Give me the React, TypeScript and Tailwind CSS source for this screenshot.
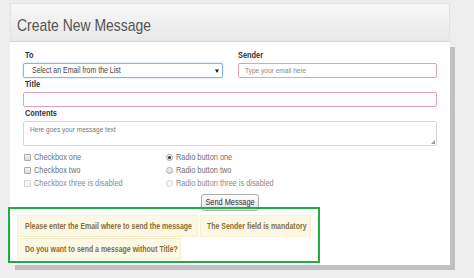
import React from "react";

const F = "font-['Liberation_Sans',Arial,sans-serif]";

function T({ c = "", center, children }: { c?: string; center?: boolean; children: React.ReactNode }) {
  return (
    <span className={`inline-block whitespace-nowrap scale-x-[0.82] ${center ? "origin-center" : "origin-left"} ${c}`}>
      {children}
    </span>
  );
}

function Check({ disabled, label }: { disabled?: boolean; label: string }) {
  return (
    <div className="h-[13px] flex items-center">
      <span
        className={`ml-[1px] w-[7px] h-[7px] shrink-0 rounded-[1px] border ${disabled ? "border-[#d4d4d4] bg-[#f6f6f6]" : "border-[#aaaaaa] bg-gradient-to-b from-[#f4f4f4] to-[#dddddd]"}`}
      />
      <T c={`ml-[3px] text-[9px] leading-[13px] ${disabled ? "text-[#8a8a8a]" : "text-[#707070]"}`}>{label}</T>
    </div>
  );
}

function Radio({ disabled, checked, label }: { disabled?: boolean; checked?: boolean; label: string }) {
  return (
    <div className="h-[13px] flex items-center">
      <span
        className={`w-[7px] h-[7px] shrink-0 rounded-full border flex items-center justify-center ${disabled ? "border-[#d4d4d4] bg-[#f6f6f6]" : "border-[#aaaaaa] bg-gradient-to-b from-[#f4f4f4] to-[#dddddd]"}`}
      >
        {checked && <span className="w-[3px] h-[3px] rounded-full bg-[#333]" />}
      </span>
      <T c={`ml-[3px] text-[9px] leading-[13px] ${disabled ? "text-[#8a8a8a]" : "text-[#707070]"}`}>{label}</T>
    </div>
  );
}

function Label({ children, c = "" }: { children: React.ReactNode; c?: string }) {
  return (
    <div className={`h-[12px] text-[9px] font-bold leading-[12px] text-[#333] ${c}`}>
      <T>{children}</T>
    </div>
  );
}

export default function App() {
  return (
    <div className={`${F} w-[474px] h-[278px] bg-[#eeeeee] relative overflow-hidden`}>
      <div className="ml-[10px] pt-[3px] w-[440px]">
        <div className="h-[39px] bg-gradient-to-b from-[#f8f8f8] to-[#e8e8e8] border border-[#e2e2e2] border-b-[#d6d6d6] pl-[6px] flex items-center pt-[5px]">
          <T c="text-[17px] text-[#555555] leading-none">Create New Message</T>
        </div>
        <div className="bg-white h-[223px] shadow-[5px_5px_0_#c0c0c0] pt-[7px] px-[13px]">
          <div className="flex gap-[15px]">
            <div className="w-[200px]">
              <Label c="pl-[2px]">To</Label>
              <div className="mt-[2px] h-[15px] rounded-[2px] border border-[#86b7e4] shadow-[0_0_2px_#a9cdee] flex items-center justify-between pl-[8px] pr-[3px]">
                <T c="text-[8.5px] text-[#444] leading-none">Select an Email from the List</T>
                <svg width="4" height="4" viewBox="0 0 4 4"><path d="M0 0.5 L4 0.5 L2 4 Z" fill="#111" /></svg>
              </div>
            </div>
            <div className="w-[199px]">
              <Label>Sender</Label>
              <div className="mt-[2px] h-[15px] rounded-[2px] border border-[#e49fbe] flex items-center pl-[6px]">
                <T c="text-[8px] text-[#888] leading-none">Type your email here</T>
              </div>
            </div>
          </div>
          <Label c="pl-[2px]">Title</Label>
          <div className="mt-[2px] h-[15px] rounded-[2px] border border-[#e49fbe]" />
          <Label c="pl-[2px]">Contents</Label>
          <div className="mt-[2px] h-[25px] rounded-[2px] border border-[#d6d6d6] relative pl-[6px] pt-[4px] flex items-start">
            <T c="text-[8px] text-[#777] leading-none">Here goes your message text</T>
            <svg className="absolute right-[1px] bottom-[1px]" width="4" height="4" viewBox="0 0 4 4">
              <path d="M4 0 L4 4 L0 4 Z" fill="#999" />
            </svg>
          </div>
          <div className="mt-[5px] flex">
            <div className="w-[143px]">
              <Check label="Checkbox one" />
              <Check label="Checkbox two" />
              <Check label="Checkbox three is disabled" disabled />
            </div>
            <div>
              <Radio label="Radio button one" checked />
              <Radio label="Radio button two" />
              <Radio label="Radio button three is disabled" disabled />
            </div>
          </div>
          <div className="mt-[4px] flex justify-center">
            <button className="w-[58px] h-[17px] rounded-[3px] border border-[#adadad] bg-gradient-to-b from-[#ffffff] to-[#e2e2e2] text-[9px] text-[#333] leading-none flex items-center justify-center overflow-visible">
              <T center>Send Message</T>
            </button>
          </div>
          <div className="mt-[4px] -ml-[6px] w-[300px] flex flex-wrap gap-x-[2px] gap-y-[1px]">
            <div className="w-[181px] h-[22px] bg-[#fcf8e3] border border-[#f8efcf] flex items-center pl-[7px]">
              <T c="text-[8.5px] font-bold text-[#8a6d3b] leading-none">Please enter the Email where to send the message</T>
            </div>
            <div className="w-[111px] h-[22px] bg-[#fcf8e3] border border-[#f8efcf] flex items-center pl-[6px]">
              <T c="text-[8.5px] font-bold text-[#8a6d3b] leading-none">The Sender field is mandatory</T>
            </div>
            <div className="w-[164px] h-[22px] bg-[#fcf8e3] border border-[#f8efcf] flex items-center pl-[7px]">
              <T c="text-[8.5px] font-bold text-[#8a6d3b] leading-none">Do you want to send a message without Title?</T>
            </div>
          </div>
        </div>
      </div>
      <div className="absolute left-[8px] top-[207px] w-[312px] h-[56px] border-2 border-[#1fae3e]" />
    </div>
  );
}
